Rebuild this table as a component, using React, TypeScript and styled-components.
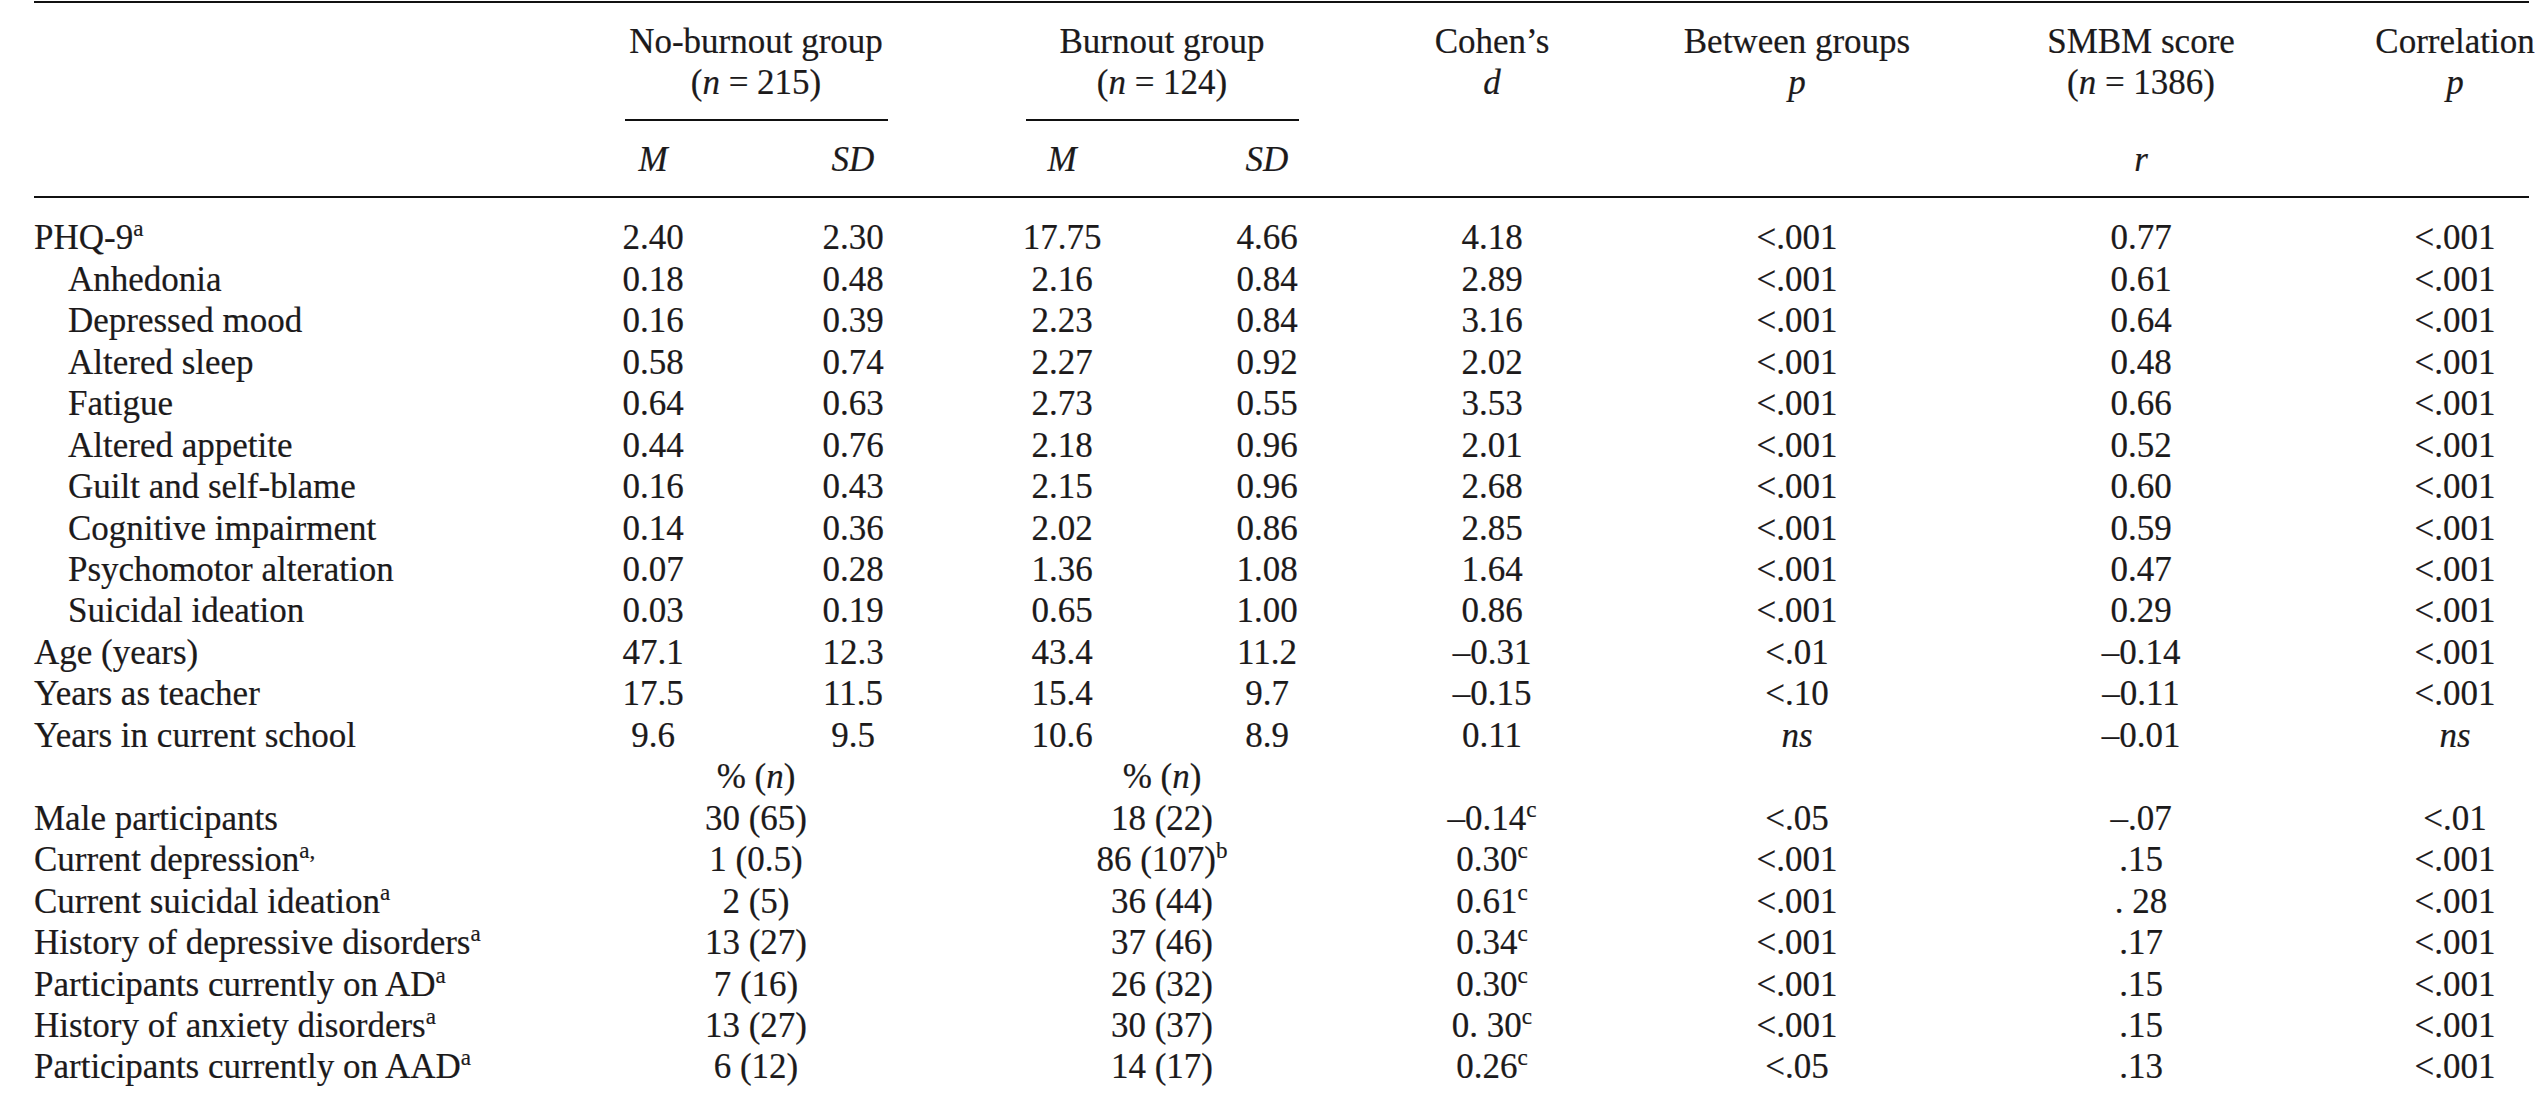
import React, { ReactNode } from "react";
import styled, { createGlobalStyle } from "styled-components";

/* ── page basics ── */
const GlobalStyle = createGlobalStyle`
  html, body {
    margin: 0;
    padding: 0;
    background: #ffffff;
  }
  body {
    font-family: "Liberation Serif", "Times New Roman", serif;
    color: #1c1a1b;
    overflow: hidden;
  }
`;

/* column tracks: label + 8 value columns, with spacer tracks between them
   value columns sit at grid lines 2, 4, 6, 8, 10, 12, 14, 16 */
const COLS =
  "552px 134px 60px 146px 63px 146px 64px 136px 62px 190px 90px 240px 104px 240px 120px 148px";

const INK = "#111";

const Page = styled.div`
  padding: 1px 0 0 34px;
`;

const Table = styled.div`
  width: 2495px;
  font-size: 35px;
  line-height: 41.45px;
  -webkit-text-stroke: 0.2px #1c1a1b;
`;

/* ── header ── */
const Head = styled.div`
  display: grid;
  grid-template-columns: ${COLS};
  row-gap: 18px;
  padding: 18px 0 16px;
  border-top: 2px solid ${INK};
  border-bottom: 2px solid ${INK};
`;

const HeadCell = styled.div<{ $col: number; $span?: number; $row: number }>`
  grid-column: ${({ $col, $span = 1 }) => `${$col} / span ${$span}`};
  grid-row: ${({ $row }) => $row};
  justify-self: center;
  align-self: start;
  display: flex;
  flex-direction: column;
  align-items: center;
  white-space: nowrap;
`;

const GroupHead = styled(HeadCell)`
  justify-self: stretch;
`;

const GroupRule = styled.div<{ $w: number }>`
  width: ${({ $w }) => $w}px;
  height: 2px;
  margin-top: 15px;
  background: ${INK};
`;

/* ── body ── */
const Body = styled.div`
  padding-top: 19px;
`;

const Row = styled.div`
  display: grid;
  grid-template-columns: ${COLS};
`;

const Label = styled.div<{ $indent?: boolean }>`
  grid-column: 1;
  padding-left: ${({ $indent }) => ($indent ? "34px" : "0")};
  white-space: nowrap;
`;

const Cell = styled.div<{ $col: number; $span?: number }>`
  grid-column: ${({ $col, $span = 1 }) => `${$col} / span ${$span}`};
  justify-self: center;
  white-space: nowrap;
`;

const Em = styled.span`
  font-style: italic;
`;

const Sup = styled.span`
  font-size: 0.66em;
  line-height: 0;
  vertical-align: 0.55em;
`;

type Cont = {
  label: ReactNode;
  indent?: boolean;
  v: ReactNode[]; // M, SD, M, SD, d, p, r, p
};

type Cat = {
  label: ReactNode;
  v: ReactNode[]; // no-burnout, burnout, d, p, r, p
};

const ns = <Em>ns</Em>;

const contRows: Cont[] = [
  { label: <>PHQ-9<Sup>a</Sup></>, v: ["2.40", "2.30", "17.75", "4.66", "4.18", "<.001", "0.77", "<.001"] },
  { label: "Anhedonia", indent: true, v: ["0.18", "0.48", "2.16", "0.84", "2.89", "<.001", "0.61", "<.001"] },
  { label: "Depressed mood", indent: true, v: ["0.16", "0.39", "2.23", "0.84", "3.16", "<.001", "0.64", "<.001"] },
  { label: "Altered sleep", indent: true, v: ["0.58", "0.74", "2.27", "0.92", "2.02", "<.001", "0.48", "<.001"] },
  { label: "Fatigue", indent: true, v: ["0.64", "0.63", "2.73", "0.55", "3.53", "<.001", "0.66", "<.001"] },
  { label: "Altered appetite", indent: true, v: ["0.44", "0.76", "2.18", "0.96", "2.01", "<.001", "0.52", "<.001"] },
  { label: "Guilt and self-blame", indent: true, v: ["0.16", "0.43", "2.15", "0.96", "2.68", "<.001", "0.60", "<.001"] },
  { label: "Cognitive impairment", indent: true, v: ["0.14", "0.36", "2.02", "0.86", "2.85", "<.001", "0.59", "<.001"] },
  { label: "Psychomotor alteration", indent: true, v: ["0.07", "0.28", "1.36", "1.08", "1.64", "<.001", "0.47", "<.001"] },
  { label: "Suicidal ideation", indent: true, v: ["0.03", "0.19", "0.65", "1.00", "0.86", "<.001", "0.29", "<.001"] },
  { label: "Age (years)", v: ["47.1", "12.3", "43.4", "11.2", "–0.31", "<.01", "–0.14", "<.001"] },
  { label: "Years as teacher", v: ["17.5", "11.5", "15.4", "9.7", "–0.15", "<.10", "–0.11", "<.001"] },
  { label: "Years in current school", v: ["9.6", "9.5", "10.6", "8.9", "0.11", ns, "–0.01", ns] },
];

const c = <Sup>c</Sup>;

const catRows: Cat[] = [
  { label: "Male participants", v: ["30 (65)", "18 (22)", <>–0.14{c}</>, "<.05", "–.07", "<.01"] },
  { label: <>Current depression<Sup>a,</Sup></>, v: ["1 (0.5)", <>86 (107)<Sup>b</Sup></>, <>0.30{c}</>, "<.001", ".15", "<.001"] },
  { label: <>Current suicidal ideation<Sup>a</Sup></>, v: ["2 (5)", "36 (44)", <>0.61{c}</>, "<.001", ". 28", "<.001"] },
  { label: <>History of depressive disorders<Sup>a</Sup></>, v: ["13 (27)", "37 (46)", <>0.34{c}</>, "<.001", ".17", "<.001"] },
  { label: <>Participants currently on AD<Sup>a</Sup></>, v: ["7 (16)", "26 (32)", <>0.30{c}</>, "<.001", ".15", "<.001"] },
  { label: <>History of anxiety disorders<Sup>a</Sup></>, v: ["13 (27)", "30 (37)", <>0. 30{c}</>, "<.001", ".15", "<.001"] },
  { label: <>Participants currently on AAD<Sup>a</Sup></>, v: ["6 (12)", "14 (17)", <>0.26{c}</>, "<.05", ".13", "<.001"] },
];

const valueCols = [2, 4, 6, 8, 10, 12, 14, 16];

export default function App() {
  return (
    <>
      <GlobalStyle />
      <Page>
        <Table>
          <Head>
            <GroupHead $col={2} $span={3} $row={1}>
              <span>No-burnout group</span>
              <span>
                (<Em>n</Em> = 215)
              </span>
              <GroupRule $w={263} />
            </GroupHead>
            <GroupHead $col={6} $span={3} $row={1}>
              <span>Burnout group</span>
              <span>
                (<Em>n</Em> = 124)
              </span>
              <GroupRule $w={273} />
            </GroupHead>
            <HeadCell $col={10} $row={1}>
              <span>Cohen’s</span>
              <Em>d</Em>
            </HeadCell>
            <HeadCell $col={12} $row={1}>
              <span>Between groups</span>
              <Em>p</Em>
            </HeadCell>
            <HeadCell $col={14} $row={1}>
              <span>SMBM score</span>
              <span>
                (<Em>n</Em> = 1386)
              </span>
            </HeadCell>
            <HeadCell $col={16} $row={1}>
              <span>Correlation</span>
              <Em>p</Em>
            </HeadCell>

            <HeadCell $col={2} $row={2}>
              <Em>M</Em>
            </HeadCell>
            <HeadCell $col={4} $row={2}>
              <Em>SD</Em>
            </HeadCell>
            <HeadCell $col={6} $row={2}>
              <Em>M</Em>
            </HeadCell>
            <HeadCell $col={8} $row={2}>
              <Em>SD</Em>
            </HeadCell>
            <HeadCell $col={14} $row={2}>
              <Em>r</Em>
            </HeadCell>
          </Head>

          <Body>
            {contRows.map((row, i) => (
              <Row key={`c${i}`}>
                <Label $indent={row.indent}>{row.label}</Label>
                {row.v.map((val, j) => (
                  <Cell key={j} $col={valueCols[j]}>
                    {val}
                  </Cell>
                ))}
              </Row>
            ))}

            {/* percentage sub-header */}
            <Row>
              <Label />
              <Cell $col={2} $span={3}>
                % (<Em>n</Em>)
              </Cell>
              <Cell $col={6} $span={3}>
                % (<Em>n</Em>)
              </Cell>
            </Row>

            {catRows.map((row, i) => (
              <Row key={`k${i}`}>
                <Label>{row.label}</Label>
                <Cell $col={2} $span={3}>
                  {row.v[0]}
                </Cell>
                <Cell $col={6} $span={3}>
                  {row.v[1]}
                </Cell>
                <Cell $col={10}>{row.v[2]}</Cell>
                <Cell $col={12}>{row.v[3]}</Cell>
                <Cell $col={14}>{row.v[4]}</Cell>
                <Cell $col={16}>{row.v[5]}</Cell>
              </Row>
            ))}
          </Body>
        </Table>
      </Page>
    </>
  );
}
